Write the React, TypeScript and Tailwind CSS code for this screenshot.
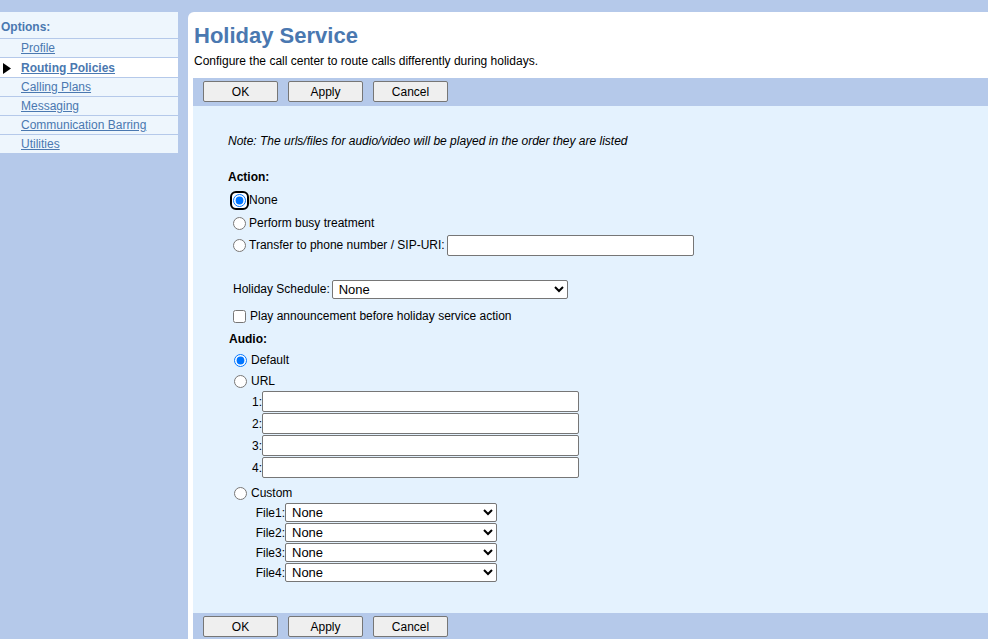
import React from "react";

const font = { fontFamily: '"Liberation Sans", Arial, sans-serif' };

function Btn({ label }: { label: string }) {
  return (
    <button className="w-[75px] h-[21px] bg-[#efefef] border border-[#767676] rounded-[2px] text-[12px] text-black leading-none">
      {label}
    </button>
  );
}

function ButtonBar({ top }: { top: boolean }) {
  return (
    <div className={`bg-[#b5c9ea] flex gap-[10px] pl-[10px] ${top ? "h-[28px] pt-[3px]" : "h-[26px] pt-[3px]"}`}>
      <Btn label="OK" />
      <Btn label="Apply" />
      <Btn label="Cancel" />
    </div>
  );
}

function Radio({ checked, focus, name }: { checked?: boolean; focus?: boolean; name: string }) {
  const r = (
    <input
      type="radio"
      name={name}
      defaultChecked={checked}
      className="m-0 w-[13px] h-[13px] shrink-0"
    />
  );
  if (focus) {
    return (
      <span className="inline-flex items-center justify-center w-[19px] h-[19px] -ml-[3px] border-2 border-black rounded-[6px] bg-white">
        {r}
      </span>
    );
  }
  return r;
}

function Sel({ w }: { w: string }) {
  return (
    <select className={`${w} h-[19px] bg-white border border-[#767676] rounded-[2px] text-[13px] text-black pl-[2px]`}>
      <option>None</option>
    </select>
  );
}

export default function App() {
  const items = [
    { t: "Profile", h: "h-[19px]" },
    { t: "Routing Policies", h: "h-[20px]", active: true },
    { t: "Calling Plans", h: "h-[19px]" },
    { t: "Messaging", h: "h-[19px]" },
    { t: "Communication Barring", h: "h-[19px]" },
    { t: "Utilities", h: "h-[18px]", last: true },
  ];
  return (
    <div style={font} className="w-[988px] h-[639px] bg-[#b5c9ea] overflow-hidden pt-[12px] flex text-[12px] text-black">
      {/* Sidebar */}
      <div className="w-[178px] shrink-0 self-start bg-[#eef6fd]">
        <div className="h-[27px] flex items-center font-bold text-[#4a78b0] border-b border-[#b5c9ea] pl-[1px] pt-[4px]">
          Options:
        </div>
        {items.map((it) => (
          <div
            key={it.t}
            className={`${it.h} flex items-center relative ${it.last ? "" : "border-b border-[#b5c9ea]"} ${it.active ? "bg-white" : ""}`}
          >
            {it.active && (
              <svg className="absolute left-[3px] top-[5px]" width="8" height="11" viewBox="0 0 8 11">
                <polygon points="0,0 8,5.5 0,11" fill="#000" />
              </svg>
            )}
            <a className={`ml-[21px] underline text-[#4a78b0] ${it.active ? "font-bold" : ""}`}>{it.t}</a>
          </div>
        ))}
      </div>

      {/* Main panel */}
      <div className="ml-[10px] flex-1 bg-white rounded-tl-[6px] pl-[5px] flex flex-col">
        <div className="pl-[1px] pt-[11px] h-[40px] text-[22px] font-bold text-[#4a78b0] leading-[26px]">
          Holiday Service
        </div>
        <div className="pl-[1px] h-[26px] leading-[16px] pt-[1px]">
          Configure the call center to route calls differently during holidays.
        </div>
        <ButtonBar top />
        <div className="flex-1 bg-[#e4f2fe] flex flex-col pl-[35px]">
          <div className="mt-[26px] h-[18px] flex items-center italic">
            Note: The urls/files for audio/video will be played in the order they are listed
          </div>
          <div className="mt-[18px] h-[18px] flex items-center font-bold">Action:</div>
          <div className="mt-[4px] h-[20px] flex items-center pl-[5px]">
            <Radio name="action" checked focus />
            <span className="ml-[0px]">None</span>
          </div>
          <div className="mt-[3px] h-[20px] flex items-center pl-[5px]">
            <Radio name="action" />
            <span className="ml-[3px]">Perform busy treatment</span>
          </div>
          <div className="mt-[1px] h-[22px] flex items-center pl-[5px]">
            <Radio name="action" />
            <span className="ml-[3px]">Transfer to phone number / SIP-URI:</span>
            <input type="text" className="ml-[2px] w-[247px] h-[21px] bg-white border border-[#767676] rounded-[2px]" />
          </div>
          <div className="mt-[23px] h-[20px] flex items-center pl-[5px]">
            <span>Holiday Schedule:</span>
            <span className="ml-[2px]">
              <Sel w="w-[236px]" />
            </span>
          </div>
          <div className="mt-[8px] h-[18px] flex items-center pl-[5px]">
            <input type="checkbox" className="m-0 w-[13px] h-[13px]" />
            <span className="ml-[4px]">Play announcement before holiday service action</span>
          </div>
          <div className="mt-[5px] h-[18px] flex items-center font-bold pl-[1px]">Audio:</div>
          <div className="mt-[3px] h-[18px] flex items-center pl-[6px]">
            <Radio name="audio" checked />
            <span className="ml-[4px]">Default</span>
          </div>
          <div className="mt-[3px] h-[18px] flex items-center pl-[6px]">
            <Radio name="audio" />
            <span className="ml-[4px]">URL</span>
          </div>
          <div className="mt-[1px] flex flex-col gap-[1px]">
            {["1:", "2:", "3:", "4:"].map((l) => (
              <div key={l} className="h-[21px] flex items-center">
                <span className="w-[34px] text-right">{l}</span>
                <input type="text" className="w-[317px] h-[21px] bg-white border border-[#767676] rounded-[2px]" />
              </div>
            ))}
          </div>
          <div className="mt-[6px] h-[18px] flex items-center pl-[6px]">
            <Radio name="audio" />
            <span className="ml-[4px]">Custom</span>
          </div>
          <div className="mt-[1px] flex flex-col gap-[1px]">
            {["File1:", "File2:", "File3:", "File4:"].map((l) => (
              <div key={l} className="h-[19px] flex items-center">
                <span className="w-[57px] text-right">{l}</span>
                <Sel w="w-[212px]" />
              </div>
            ))}
          </div>
        </div>
        <ButtonBar top={false} />
      </div>
    </div>
  );
}
